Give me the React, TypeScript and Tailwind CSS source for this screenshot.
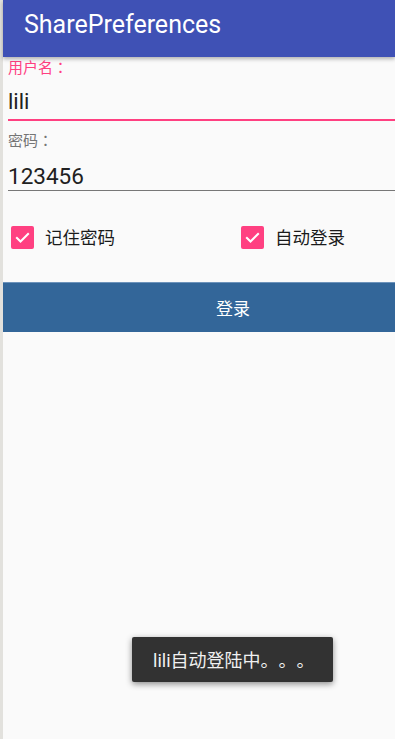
import React from 'react';

const cjk = { fontFamily: '"Noto Sans CJK SC", sans-serif' };
const cjkTc = { fontFamily: '"Noto Sans CJK TC", sans-serif' };

const CheckBox = ({ label }: { label: string }) => (
  <div className="flex items-center">
    <div className="flex h-[23px] w-[23px] items-center justify-center rounded-[2px] bg-[#ff4081]">
      <svg viewBox="0 0 24 24" className="h-[19px] w-[19px]" fill="none" stroke="white" strokeWidth="2.6" strokeLinecap="square">
        <path d="M5 12.5l4.5 4.5L19 7.5" />
      </svg>
    </div>
    <span className="ml-[11px] text-[17.5px] text-[#1a1a1a]" style={cjk}>{label}</span>
  </div>
);

export default function App() {
  return (
    <div
      className="flex h-[739px] w-[395px] overflow-hidden bg-[#e2e1dd] [text-spacing-trim:space-all]"
      style={{ fontFamily: 'Roboto, "Noto Sans CJK SC", sans-serif' }}
    >
      <div className="relative ml-[3px] flex flex-1 flex-col bg-[#fafafa]">
        {/* toolbar */}
        <div className="relative z-10 flex h-[57px] items-center bg-[#3f51b5] pl-[21px] pb-[8px] shadow-[0_2px_4px_rgba(0,0,0,0.3)]">
          <span className="text-[25px] text-white">SharePreferences</span>
        </div>

        {/* username / password */}
        <div className="pl-[5px]">
          <div className="mt-[2px] text-[15px] leading-[16px] text-[#ff4081]" style={cjk}>
            用户名<span style={cjkTc}>：</span>
          </div>
          <div className="mt-[15px] text-[22px] leading-[24px] text-[#212121]">lili</div>
          <div className="mt-[5px] h-[2px] bg-[#ff4081]" />

          <div className="mt-[11px] text-[15px] leading-[16px] text-[#757575]" style={cjk}>
            密码<span style={cjkTc}>：</span>
          </div>
          <div className="mt-[16px] text-[22.5px] leading-[24px] text-[#212121]">123456</div>
          <div className="mt-[2px] h-[1px] bg-[#777]" />
        </div>

        {/* checkboxes */}
        <div className="mt-[33px] flex pl-[8px]">
          <div className="w-[230px]">
            <CheckBox label="记住密码" />
          </div>
          <CheckBox label="自动登录" />
        </div>

        {/* login button */}
        <div className="mt-[32px] flex h-[50px] items-center justify-center border-t border-[#6d93bb] bg-[#336699] pl-[68px]">
          <span className="text-[17px] text-white" style={cjk}>登录</span>
        </div>

        {/* toast */}
        <div className="absolute left-[129px] top-[637px] flex h-[45px] w-[201px] items-center rounded-[2px] bg-[#323232] pl-[21px] shadow-[0_2px_6px_rgba(0,0,0,0.45)]">
          <span className="whitespace-nowrap text-[18px] text-[#f0f0f0]">
            lili<span style={cjk}>自动登陆中。。。</span>
          </span>
        </div>
      </div>
    </div>
  );
}
